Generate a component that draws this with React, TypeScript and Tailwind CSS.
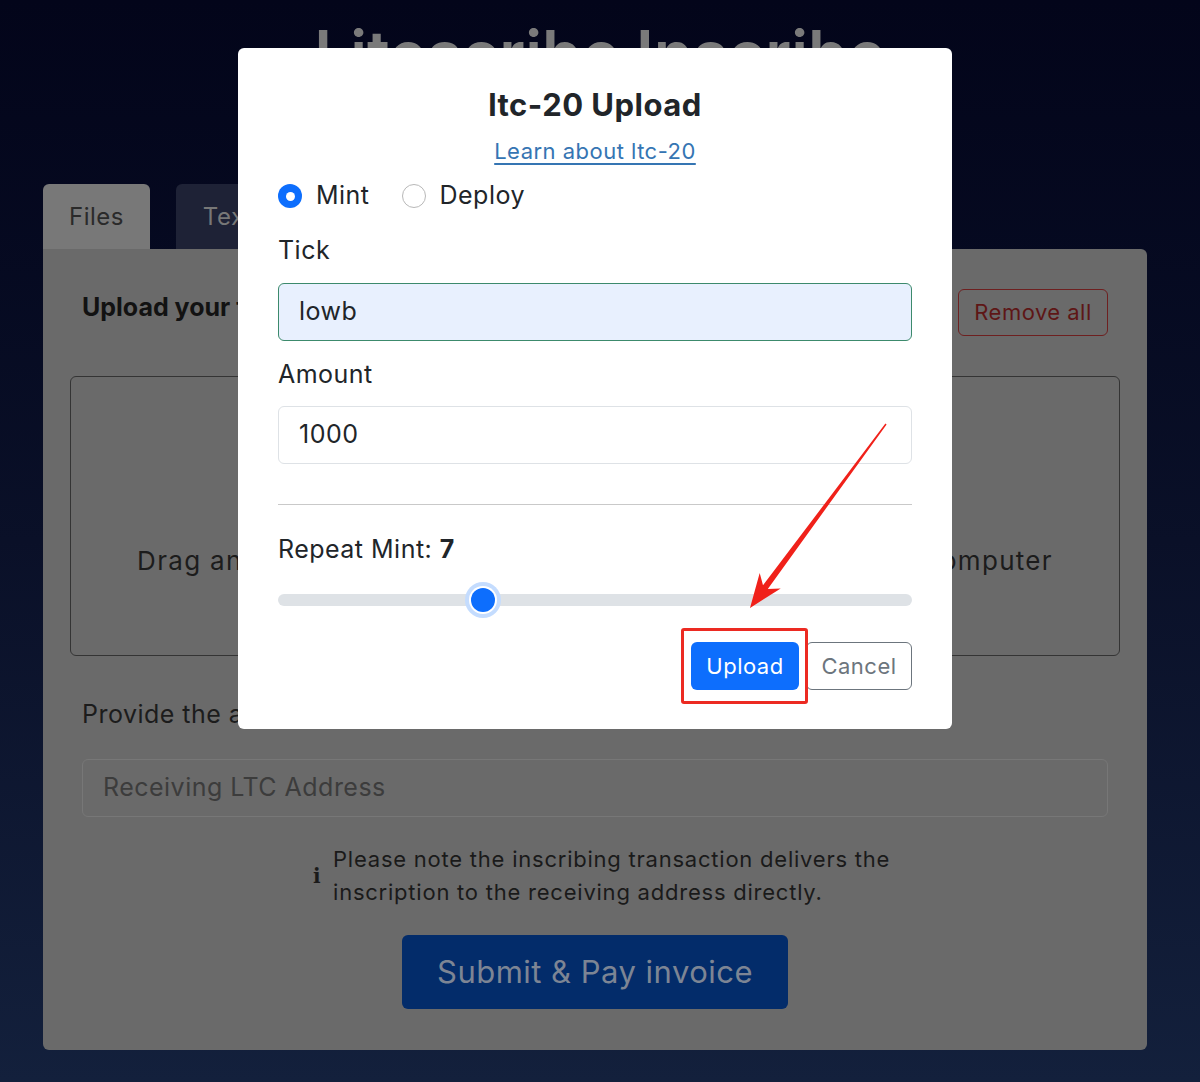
import React, { useState } from 'react';

const tabs = ['Files', 'Text', 'Domain'];

function RedArrow() {
  // hand-drawn annotation pointing at the Upload button
  return (
    <svg className="pointer-events-none absolute left-0 top-0" width="1200" height="1082" viewBox="0 0 1200 1082">
      <polygon
        fill="#f0211a"
        points="886.6,424.5 767.8,588.9 780.7,588.4 750,608 759.7,573 763,585.3 885.4,423.5"
      />
    </svg>
  );
}

function UploadModal() {
  const [op, setOp] = useState<'mint' | 'deploy'>('mint');
  const repeat = 7;

  return (
    <div className="absolute left-[238px] top-[48px] flex w-[714px] flex-col rounded-md bg-white px-10 pb-[39px] pt-[37px] text-[#212529]">
      <h2 className="text-center text-[31px] font-bold leading-[40px]">ltc-20 Upload</h2>
      <a className="mt-[10px] text-center text-[22px] leading-8 text-[#3575b3] underline underline-offset-4">
        Learn about ltc-20
      </a>

      <div className="mt-[13px] flex h-8 items-center text-[25px]">
        <button className="flex items-center gap-[14px]" onClick={() => setOp('mint')}>
          <span className="flex h-6 w-6 items-center justify-center rounded-full bg-[#0d6efd]">
            <span className="h-[9px] w-[9px] rounded-full bg-white" />
          </span>
          <span>Mint</span>
        </button>
        <button className="ml-[32px] flex items-center gap-[14px]" onClick={() => setOp('deploy')}>
          <span className="h-6 w-6 rounded-full border border-[#b8b8b8] bg-white" />
          <span>Deploy</span>
        </button>
      </div>

      <label className="mt-[22px] text-[25px] leading-8">Tick</label>
      <div className="mt-[17px] flex h-[58px] items-center rounded-md border border-[#3c8a6c] bg-[#e8f0fe] px-5 text-[25px]">
        lowb
      </div>

      <label className="mt-[17px] text-[25px] leading-8">Amount</label>
      <div className="mt-4 flex h-[58px] items-center rounded-md border border-[#dee2e6] bg-white px-5 text-[25px]">
        1000
      </div>

      <hr className="mt-10 border-t border-[#c9c9c9]" />

      <div className="mt-[28px] text-[25px] leading-8">
        Repeat Mint: <b>{repeat}</b>
      </div>

      <div className="relative mt-[23px] flex h-6 items-center">
        <div className="h-3 w-full rounded-full bg-[#dee2e6]" />
        <span className="absolute left-[193px] top-0 h-6 w-6 rounded-full bg-[#0d6efd] shadow-[0_0_0_2px_#fff,0_0_0_6px_#c4dcfe]" />
      </div>

      <div className="relative mt-[30px] flex justify-end gap-[7px]">
        <span className="absolute right-[104px] top-[-14px] h-[76px] w-[127px] rounded-[3px] border-[3px] border-[#ec2a22]" />
        <button className="h-12 w-[108px] rounded-md bg-[#0d6efd] text-[22px] text-white">Upload</button>
        <button className="h-12 w-[106px] rounded-md border border-[#6c757d] text-[22px] text-[#6c757d]">Cancel</button>
      </div>
      <span className="hidden">{op}</span>
    </div>
  );
}

export default function App() {
  return (
    <div className="relative h-[1082px] w-[1200px] overflow-hidden bg-gradient-to-b from-[#03051a] via-[#0a1028] to-[#13203c] font-['Inter','Noto_Sans',sans-serif] tracking-[0.03em]">
      <h1 className="pt-4 text-center text-[64px] font-semibold leading-[76px] tracking-normal text-[#7a7a7a]">Litescribe Inscribe</h1>

      <div className="ml-[43px] mt-[92px] flex w-[1104px] flex-col">
        <div className="flex h-[65px] gap-[26px]">
          {tabs.map((t, i) => (
            <div
              key={t}
              className={
                i === 0
                  ? 'flex items-center rounded-t-md bg-[#787878] px-[26px] text-[24px] text-[#2a2a2a]'
                  : 'flex items-center rounded-t-md bg-[#1e2236] px-[27px] text-[24px] text-[#777777]'
              }
            >
              {t}
            </div>
          ))}
        </div>

        <div className="flex h-[801px] flex-col rounded-md rounded-tl-none bg-[#6a6a6a] px-[27px] pt-10">
          <div className="mx-3 flex h-[47px] items-center justify-between">
            <span className="mb-[10px] text-[25px] font-bold tracking-normal text-[#121212]">Upload your files</span>
            <button className="h-[47px] w-[150px] rounded-md border border-[#6e2020] text-[22px] text-[#5e1616]">Remove all</button>
          </div>

          <div className="mt-10 flex h-[280px] items-center justify-center rounded-md border border-[#343434] pt-[88px] text-[26px] tracking-[0.05em] text-[#1c1c1c]">
            Drag and drop your files here, or click to select from your computer
          </div>

          <div className="mx-3 mt-[42px] text-[25px] leading-8 text-[#1c1c1c]">Provide the address to receive the inscription</div>

          <div className="mx-3 mt-[29px] flex h-[58px] items-center rounded-md border border-[#777777] px-5 text-[25px] text-[#3c3c3c]">
            Receiving LTC Address
          </div>

          <div className="mt-[26px] flex justify-center">
            <div className="ml-[26px] flex items-center gap-[12px]">
              <span className="font-['DejaVu_Serif',serif] text-[20px] font-bold text-[#1a1a1a]">i</span>
              <p className="w-[570px] text-[22px] leading-[33px] tracking-[0.035em] text-[#1a1a1a]">
                Please note the inscribing transaction delivers the inscription to the receiving address directly.
              </p>
            </div>
          </div>

          <div className="mt-[26px] flex justify-center">
            <button className="h-[74px] w-[386px] rounded-md bg-[#032c6a] text-[31px] text-[#7d8594]">Submit &amp; Pay invoice</button>
          </div>
        </div>
      </div>

      <UploadModal />
      <RedArrow />
    </div>
  );
}
